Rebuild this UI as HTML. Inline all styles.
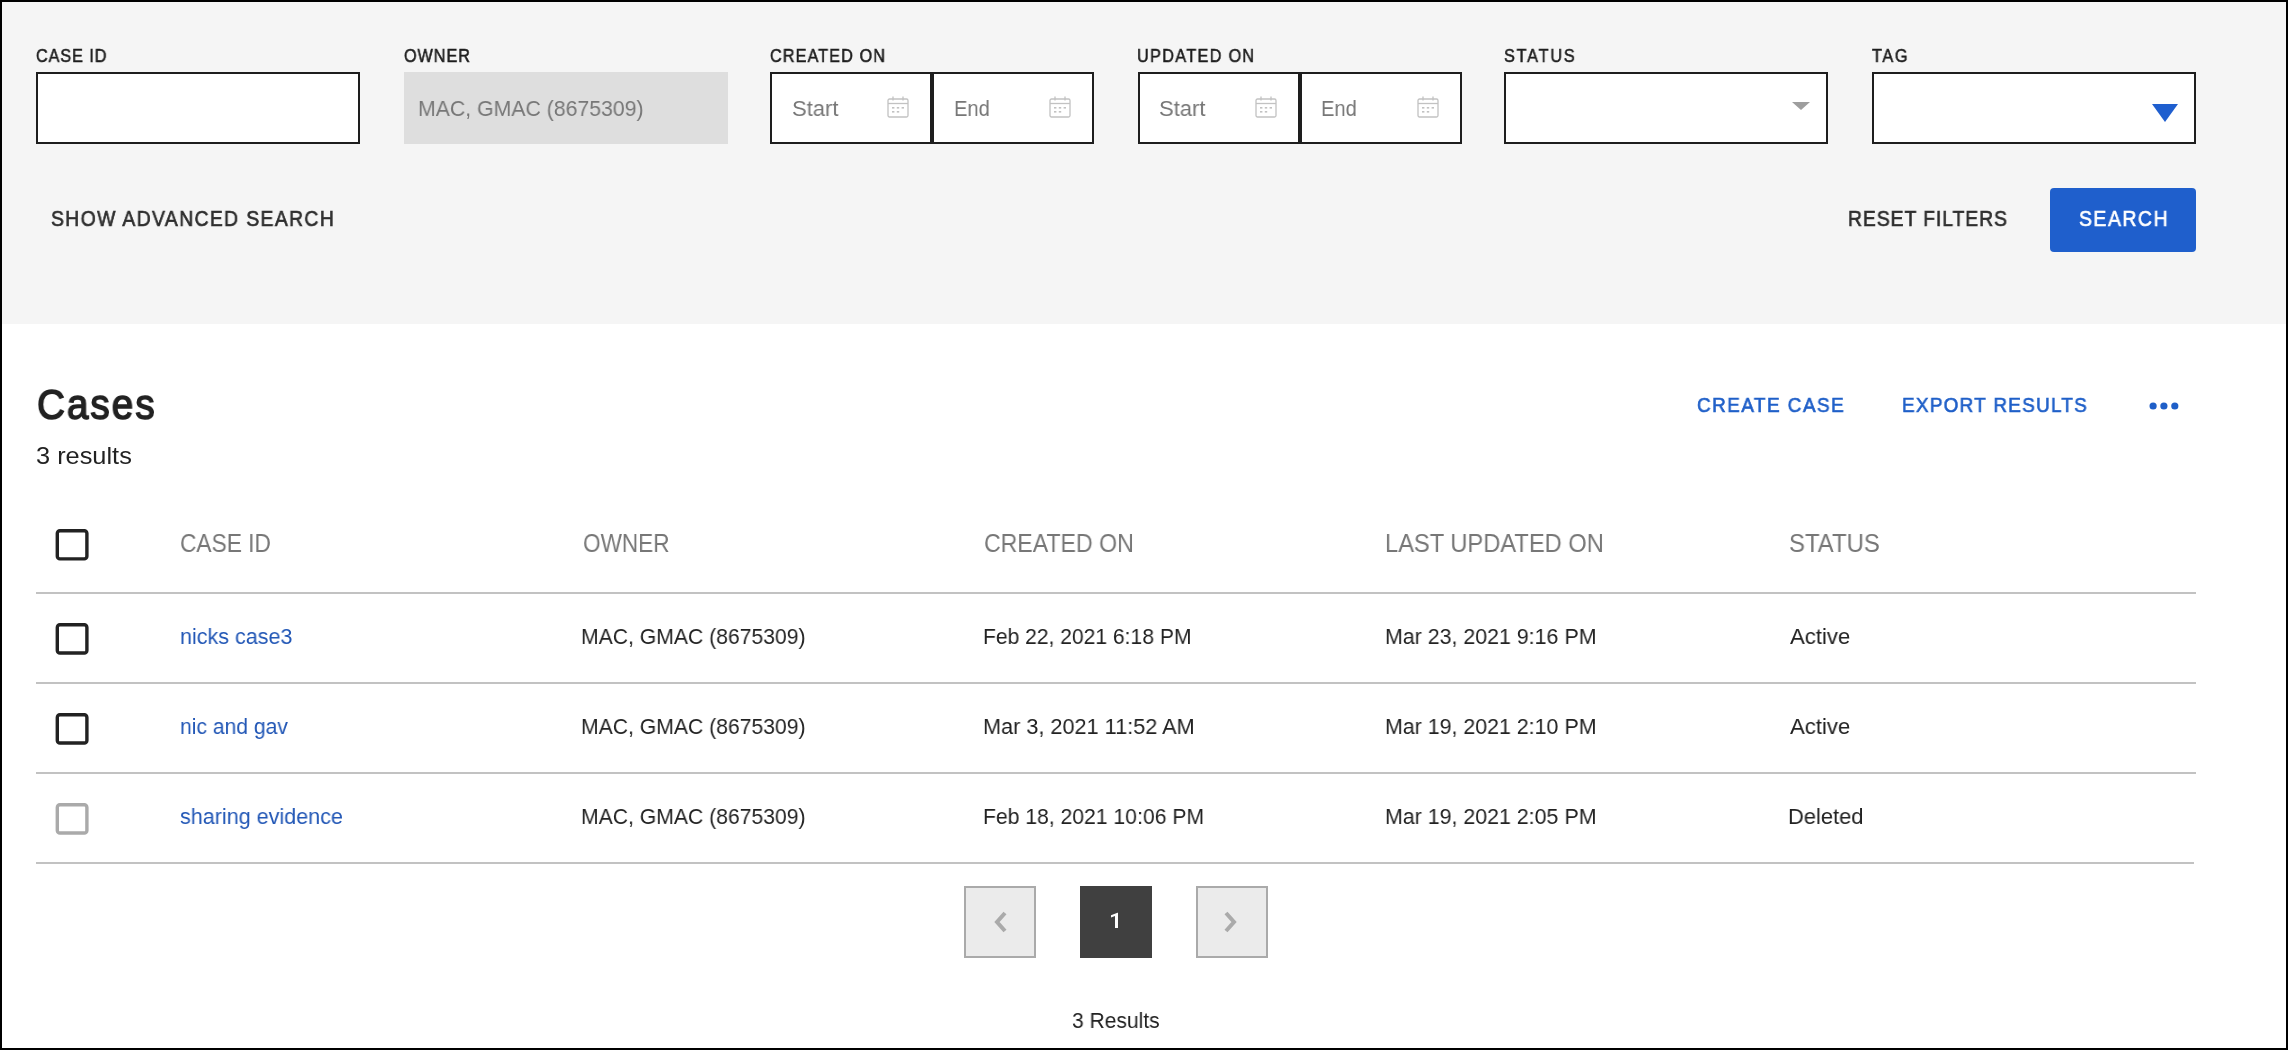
<!DOCTYPE html>
<html><head><meta charset="utf-8"><title>Cases</title>
<style>
html,body{margin:0;padding:0;}
body{width:2288px;height:1050px;overflow:hidden;position:relative;background:#fff;font-family:"Liberation Sans", sans-serif;}
.t{position:absolute;white-space:nowrap;line-height:1;font-weight:400;transform-origin:0 0;will-change:transform;}
.b{position:absolute;display:block;}
.frame{position:absolute;left:0;top:0;width:2288px;height:1050px;box-sizing:border-box;border:2px solid #000;}

</style></head><body>
<div class="b" style="left:2px;top:2px;width:2284px;height:322px;background:#f5f5f5"></div>
<div class="b" style="left:36px;top:72px;width:324px;height:72px;border:2px solid #1e1e1e;box-sizing:border-box;background:#fff"></div>
<div class="b" style="left:404px;top:72px;width:324px;height:72px;background:#dedede"></div>
<div class="b" style="left:770px;top:72px;width:162px;height:72px;border:2px solid #1e1e1e;box-sizing:border-box;background:#fff"></div>
<div class="b" style="left:932px;top:72px;width:162px;height:72px;border:2px solid #1e1e1e;box-sizing:border-box;background:#fff"></div>
<div class="b" style="left:1138px;top:72px;width:162px;height:72px;border:2px solid #1e1e1e;box-sizing:border-box;background:#fff"></div>
<div class="b" style="left:1300px;top:72px;width:162px;height:72px;border:2px solid #1e1e1e;box-sizing:border-box;background:#fff"></div>
<div class="b" style="left:1504px;top:72px;width:324px;height:72px;border:2px solid #1e1e1e;box-sizing:border-box;background:#fff"></div>
<div class="b" style="left:1872px;top:72px;width:324px;height:72px;border:2px solid #1e1e1e;box-sizing:border-box;background:#fff"></div>
<svg class="b" style="left:887px;top:95.5px" width="22" height="22" viewBox="0 0 22 22"><g fill="none" stroke="#c2c2c2" stroke-width="1.3"><rect x="1" y="3" width="20" height="18" rx="1.5"/><line x1="1" y1="7.5" x2="21" y2="7.5"/><line x1="6" y1="0.5" x2="6" y2="4.5"/><line x1="16" y1="0.5" x2="16" y2="4.5"/></g><g fill="#c2c2c2"><rect x="5" y="11" width="2.4" height="1.6"/><rect x="9.8" y="11" width="2.4" height="1.6"/><rect x="14.6" y="11" width="2.4" height="1.6"/><rect x="5" y="15" width="2.4" height="1.6"/><rect x="9.8" y="15" width="2.4" height="1.6"/></g></svg>
<svg class="b" style="left:1049px;top:95.5px" width="22" height="22" viewBox="0 0 22 22"><g fill="none" stroke="#c2c2c2" stroke-width="1.3"><rect x="1" y="3" width="20" height="18" rx="1.5"/><line x1="1" y1="7.5" x2="21" y2="7.5"/><line x1="6" y1="0.5" x2="6" y2="4.5"/><line x1="16" y1="0.5" x2="16" y2="4.5"/></g><g fill="#c2c2c2"><rect x="5" y="11" width="2.4" height="1.6"/><rect x="9.8" y="11" width="2.4" height="1.6"/><rect x="14.6" y="11" width="2.4" height="1.6"/><rect x="5" y="15" width="2.4" height="1.6"/><rect x="9.8" y="15" width="2.4" height="1.6"/></g></svg>
<svg class="b" style="left:1255px;top:95.5px" width="22" height="22" viewBox="0 0 22 22"><g fill="none" stroke="#c2c2c2" stroke-width="1.3"><rect x="1" y="3" width="20" height="18" rx="1.5"/><line x1="1" y1="7.5" x2="21" y2="7.5"/><line x1="6" y1="0.5" x2="6" y2="4.5"/><line x1="16" y1="0.5" x2="16" y2="4.5"/></g><g fill="#c2c2c2"><rect x="5" y="11" width="2.4" height="1.6"/><rect x="9.8" y="11" width="2.4" height="1.6"/><rect x="14.6" y="11" width="2.4" height="1.6"/><rect x="5" y="15" width="2.4" height="1.6"/><rect x="9.8" y="15" width="2.4" height="1.6"/></g></svg>
<svg class="b" style="left:1417px;top:95.5px" width="22" height="22" viewBox="0 0 22 22"><g fill="none" stroke="#c2c2c2" stroke-width="1.3"><rect x="1" y="3" width="20" height="18" rx="1.5"/><line x1="1" y1="7.5" x2="21" y2="7.5"/><line x1="6" y1="0.5" x2="6" y2="4.5"/><line x1="16" y1="0.5" x2="16" y2="4.5"/></g><g fill="#c2c2c2"><rect x="5" y="11" width="2.4" height="1.6"/><rect x="9.8" y="11" width="2.4" height="1.6"/><rect x="14.6" y="11" width="2.4" height="1.6"/><rect x="5" y="15" width="2.4" height="1.6"/><rect x="9.8" y="15" width="2.4" height="1.6"/></g></svg>
<svg class="b" style="left:1792px;top:102px" width="18" height="8" viewBox="0 0 18 8"><path d="M0 0H18L9 8Z" fill="#9e9e9e"/></svg>
<svg class="b" style="left:2152px;top:104px" width="26" height="18" viewBox="0 0 26 18"><path d="M0 0H26L13 18Z" fill="#1f5fcf"/></svg>
<div class="b" style="left:2050px;top:188px;width:146px;height:64px;background:#1f5fcc;border-radius:4px"></div>
<svg class="b" style="left:2149px;top:402px" width="30" height="9" viewBox="0 0 30 9"><g fill="#1f5fc8"><circle cx="4.1" cy="4" r="3.6"/><circle cx="14.9" cy="4" r="3.6"/><circle cx="25.8" cy="4" r="3.6"/></g></svg>
<svg class="b" style="left:54px;top:528px" width="36" height="35" viewBox="0 0 36 35"><rect x="3.30" y="2.70" width="29.6" height="28.2" rx="2.6" fill="none" stroke="#222" stroke-width="3.4"/></svg>
<div class="b" style="left:36px;top:592px;width:2160px;height:2px;background:#c2c2c2"></div>
<div class="b" style="left:36px;top:682px;width:2160px;height:2px;background:#c2c2c2"></div>
<div class="b" style="left:36px;top:772px;width:2160px;height:2px;background:#c2c2c2"></div>
<div class="b" style="left:36px;top:862px;width:2158px;height:2px;background:#c2c2c2"></div>
<svg class="b" style="left:54px;top:622px" width="36" height="35" viewBox="0 0 36 35"><rect x="3.30" y="2.80" width="29.6" height="28.2" rx="2.6" fill="none" stroke="#222" stroke-width="3.4"/></svg>
<svg class="b" style="left:54px;top:712px" width="36" height="35" viewBox="0 0 36 35"><rect x="3.30" y="2.80" width="29.6" height="28.2" rx="2.6" fill="none" stroke="#222" stroke-width="3.4"/></svg>
<svg class="b" style="left:54px;top:802px" width="36" height="35" viewBox="0 0 36 35"><rect x="3.30" y="2.80" width="29.6" height="28.2" rx="2.6" fill="none" stroke="#aaa" stroke-width="3.4"/></svg>
<div class="b" style="left:964px;top:886px;width:72px;height:72px;background:#ebebeb;border:2px solid #aaa;box-sizing:border-box"></div>
<div class="b" style="left:1080px;top:886px;width:72px;height:72px;background:#404040"></div>
<div class="b" style="left:1196px;top:886px;width:72px;height:72px;background:#ebebeb;border:2px solid #aaa;box-sizing:border-box"></div>
<svg class="b" style="left:993px;top:911px" width="16" height="22" viewBox="0 0 16 22"><path d="M12 2L4 11L12 20" fill="none" stroke="#aaa" stroke-width="4"/></svg>
<svg class="b" style="left:1222px;top:911px" width="16" height="22" viewBox="0 0 16 22"><path d="M4 2L12 11L4 20" fill="none" stroke="#aaa" stroke-width="4"/></svg>
<svg class="b" style="left:1108px;top:908px" width="14" height="24" viewBox="0 0 14 24"><path d="M7,20.1L10,20.1L10,4.7L9.5,4.7L3,7.2L3,9.4L7,8Z" fill="#fff"/></svg>
<div class="t" style="left:36.00px;top:47.35px;font-size:18px;color:#1e1e1e;letter-spacing:1.030px;-webkit-text-stroke:0.54px #1e1e1e;transform:scaleX(0.9000);">CASE ID</div>
<div class="t" style="left:404.00px;top:47.35px;font-size:18px;color:#1e1e1e;letter-spacing:1.067px;-webkit-text-stroke:0.54px #1e1e1e;transform:scaleX(0.9000);">OWNER</div>
<div class="t" style="left:770.00px;top:47.35px;font-size:18px;color:#1e1e1e;letter-spacing:1.217px;-webkit-text-stroke:0.54px #1e1e1e;transform:scaleX(0.9000);">CREATED ON</div>
<div class="t" style="left:1137.30px;top:47.35px;font-size:18px;color:#1e1e1e;letter-spacing:1.494px;-webkit-text-stroke:0.54px #1e1e1e;transform:scaleX(0.9000);">UPDATED ON</div>
<div class="t" style="left:1504.40px;top:47.35px;font-size:18px;color:#1e1e1e;letter-spacing:2.031px;-webkit-text-stroke:0.54px #1e1e1e;transform:scaleX(0.9000);">STATUS</div>
<div class="t" style="left:1872.20px;top:47.35px;font-size:18px;color:#1e1e1e;letter-spacing:1.889px;-webkit-text-stroke:0.54px #1e1e1e;transform:scaleX(0.9000);">TAG</div>
<div class="t" style="left:418.00px;top:97.83px;font-size:22.5px;color:#777;letter-spacing:0.000px;transform:scaleX(0.9447);">MAC, GMAC (8675309)</div>
<div class="t" style="left:792.00px;top:98.33px;font-size:22.5px;color:#777;letter-spacing:0.000px;transform:scaleX(0.9783);">Start</div>
<div class="t" style="left:953.80px;top:98.33px;font-size:22.5px;color:#777;letter-spacing:0.000px;transform:scaleX(0.8952);">End</div>
<div class="t" style="left:1159.00px;top:98.33px;font-size:22.5px;color:#777;letter-spacing:0.000px;transform:scaleX(0.9783);">Start</div>
<div class="t" style="left:1320.80px;top:98.33px;font-size:22.5px;color:#777;letter-spacing:0.000px;transform:scaleX(0.8952);">End</div>
<div class="t" style="left:50.50px;top:209.19px;font-size:21.5px;color:#2e2e2e;letter-spacing:1.529px;-webkit-text-stroke:0.65px #2e2e2e;transform:scaleX(0.9000);">SHOW ADVANCED SEARCH</div>
<div class="t" style="left:1847.60px;top:208.99px;font-size:21.5px;color:#2e2e2e;letter-spacing:1.044px;-webkit-text-stroke:0.65px #2e2e2e;transform:scaleX(0.9000);">RESET FILTERS</div>
<div class="t" style="left:2078.80px;top:208.99px;font-size:21.5px;color:#fff;letter-spacing:1.764px;-webkit-text-stroke:0.65px #fff;transform:scaleX(0.9000);">SEARCH</div>
<div class="t" style="left:37.10px;top:383.18px;font-size:43px;color:#222;letter-spacing:2.200px;-webkit-text-stroke:1.55px #222;transform:scaleX(0.9000);">Cases</div>
<div class="t" style="left:36.10px;top:444.40px;font-size:24px;color:#222;letter-spacing:0.000px;transform:scaleX(1.0562);">3 results</div>
<div class="t" style="left:1697.40px;top:393.77px;font-size:21px;color:#1f5fc8;letter-spacing:1.631px;-webkit-text-stroke:0.63px #1f5fc8;transform:scaleX(0.9000);">CREATE CASE</div>
<div class="t" style="left:1902.00px;top:393.77px;font-size:21px;color:#1f5fc8;letter-spacing:1.431px;-webkit-text-stroke:0.63px #1f5fc8;transform:scaleX(0.9000);">EXPORT RESULTS</div>
<div class="t" style="left:180.10px;top:531.24px;font-size:25px;color:#777;letter-spacing:0.000px;transform:scaleX(0.9082);">CASE ID</div>
<div class="t" style="left:582.50px;top:531.24px;font-size:25px;color:#777;letter-spacing:0.000px;transform:scaleX(0.9032);">OWNER</div>
<div class="t" style="left:984.00px;top:531.24px;font-size:25px;color:#777;letter-spacing:0.000px;transform:scaleX(0.9245);">CREATED ON</div>
<div class="t" style="left:1384.70px;top:531.24px;font-size:25px;color:#777;letter-spacing:0.000px;transform:scaleX(0.9471);">LAST UPDATED ON</div>
<div class="t" style="left:1789.30px;top:531.24px;font-size:25px;color:#777;letter-spacing:0.000px;transform:scaleX(0.9566);">STATUS</div>
<div class="t" style="left:179.90px;top:626.43px;font-size:22.5px;color:#2257b6;letter-spacing:0.000px;transform:scaleX(0.9566);">nicks case3</div>
<div class="t" style="left:581.00px;top:626.33px;font-size:22.5px;color:#222;letter-spacing:0.000px;transform:scaleX(0.9404);">MAC, GMAC (8675309)</div>
<div class="t" style="left:983.30px;top:626.43px;font-size:22.5px;color:#222;letter-spacing:0.000px;transform:scaleX(0.9361);">Feb 22, 2021 6:18 PM</div>
<div class="t" style="left:1385.40px;top:626.43px;font-size:22.5px;color:#222;letter-spacing:0.000px;transform:scaleX(0.9498);">Mar 23, 2021 9:16 PM</div>
<div class="t" style="left:1789.50px;top:625.73px;font-size:22.5px;color:#222;letter-spacing:0.000px;transform:scaleX(0.9833);">Active</div>
<div class="t" style="left:179.90px;top:716.33px;font-size:22.5px;color:#2257b6;letter-spacing:0.000px;transform:scaleX(0.9381);">nic and gav</div>
<div class="t" style="left:581.00px;top:716.33px;font-size:22.5px;color:#222;letter-spacing:0.000px;transform:scaleX(0.9404);">MAC, GMAC (8675309)</div>
<div class="t" style="left:983.30px;top:716.33px;font-size:22.5px;color:#222;letter-spacing:0.000px;transform:scaleX(0.9630);">Mar 3, 2021 11:52 AM</div>
<div class="t" style="left:1385.20px;top:716.33px;font-size:22.5px;color:#222;letter-spacing:0.000px;transform:scaleX(0.9498);">Mar 19, 2021 2:10 PM</div>
<div class="t" style="left:1789.50px;top:715.73px;font-size:22.5px;color:#222;letter-spacing:0.000px;transform:scaleX(0.9833);">Active</div>
<div class="t" style="left:179.90px;top:806.33px;font-size:22.5px;color:#2257b6;letter-spacing:0.000px;transform:scaleX(0.9583);">sharing evidence</div>
<div class="t" style="left:581.00px;top:806.33px;font-size:22.5px;color:#222;letter-spacing:0.000px;transform:scaleX(0.9404);">MAC, GMAC (8675309)</div>
<div class="t" style="left:983.30px;top:806.33px;font-size:22.5px;color:#222;letter-spacing:0.000px;transform:scaleX(0.9397);">Feb 18, 2021 10:06 PM</div>
<div class="t" style="left:1385.20px;top:806.33px;font-size:22.5px;color:#222;letter-spacing:0.000px;transform:scaleX(0.9498);">Mar 19, 2021 2:05 PM</div>
<div class="t" style="left:1787.50px;top:805.63px;font-size:22.5px;color:#222;letter-spacing:0.000px;transform:scaleX(0.9735);">Deleted</div>
<div class="t" style="left:1071.70px;top:1010.43px;font-size:22.5px;color:#222;letter-spacing:0.000px;transform:scaleX(0.9348);">3 Results</div>
<div class="frame"></div>
</body></html>
